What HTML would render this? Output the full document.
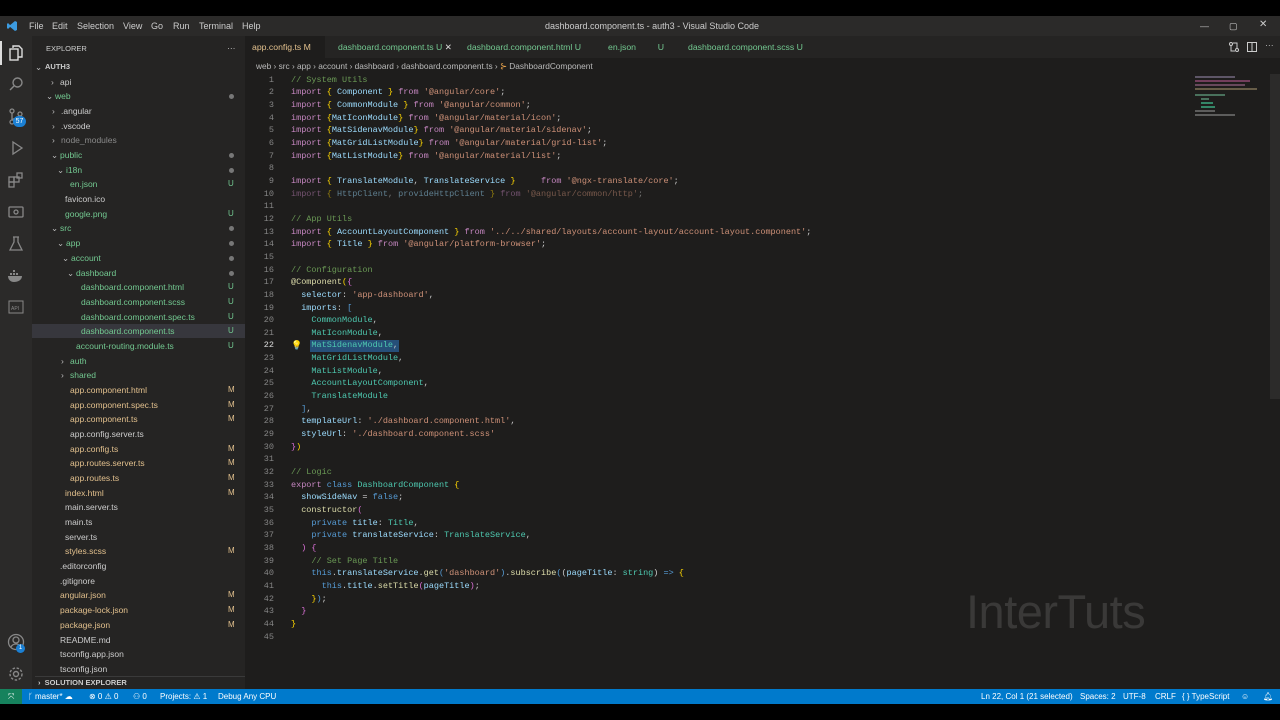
<!DOCTYPE html>
<html><head><meta charset="utf-8"><style>
*{margin:0;padding:0;box-sizing:border-box}
body{width:1280px;height:720px;background:#000;position:relative;overflow:hidden;font-family:"Liberation Sans",sans-serif;color:#ccc}
.abs{position:absolute}
#title{top:16px;left:0;width:1280px;height:20px;background:#2b2a29;font-size:9px}
#title span{position:absolute;top:5px;color:#ccc}
#act{top:36px;left:0;width:32px;height:653px;background:#2b2a29}
#side{top:36px;left:32px;width:213px;height:653px;background:#252423}
#ed{top:36px;left:245px;width:1035px;height:653px;background:#1e1d1c}
#tabs{top:36px;left:245px;width:1035px;height:22px;background:#252423;font-size:8.7px}
.tab{position:absolute;top:0;height:22px;line-height:22px;padding-left:7px}
.row{position:absolute;font-size:8.5px;height:14px;line-height:14px;white-space:nowrap}
.g{color:#73c991}.m{color:#e2c08d}.w{color:#ccc}.gr{color:#8a8a8a}
.badge{position:absolute;left:228px;font-size:8px}
.dot{position:absolute;left:229px;width:5px;height:5px;border-radius:50%;background:#777}
#code{position:absolute;left:0;top:73.7px;font-family:"Liberation Mono",monospace;font-size:8.5px;line-height:12.66px;white-space:pre}
#nums{position:absolute;left:245px;width:29px;text-align:right;top:73.7px;font-family:"Liberation Mono",monospace;font-size:8.5px;line-height:12.66px;color:#858585;white-space:pre}
.k{color:#c586c0}.b{color:#ffd700}.i{color:#9cdcfe}.s{color:#ce9178}.c{color:#6a9955}.t{color:#4ec9b0}.f{color:#dcdcaa}.p{color:#da70d6}.d{color:#569cd6}.dim{opacity:.5}
#status{top:689px;left:0;width:1280px;height:15px;background:#007acc;font-size:8px;color:#fff}
#status span{position:absolute;top:3px}
</style></head><body>
<div id="title" class="abs">
<svg class="abs" style="left:6px;top:4px" width="12" height="12" viewBox="0 0 12 12"><path d="M9 1 L11 2 V10 L9 11 L3 6 Z M1 4 L2 3 L5 6 L2 9 L1 8 Z" fill="#3c9be0"/></svg>
<span style="left:29px">File</span><span style="left:52px">Edit</span><span style="left:77px">Selection</span><span style="left:123px">View</span><span style="left:151px">Go</span><span style="left:173px">Run</span><span style="left:199px">Terminal</span><span style="left:242px">Help</span>
<span style="left:545px">dashboard.component.ts - auth3 - Visual Studio Code</span>
<span style="left:1200px;color:#bbb">—</span><span style="left:1229px">▢</span><span style="left:1259px;font-size:10px;top:3px">✕</span>
</div>
<div id="act" class="abs">
<svg class="abs" style="left:7px;top:8px" width="18" height="18" viewBox="0 0 18 18" fill="none" stroke="#ddd" stroke-width="1.4"><path d="M6 4 V2 H12 L15 5 V13 H11"/><rect x="3" y="5" width="8" height="11"/></svg>
<div class="abs" style="left:0;top:5px;width:2px;height:24px;background:#ddd"></div>
<svg class="abs" style="left:8px;top:40px" width="16" height="16" viewBox="0 0 16 16" fill="none" stroke="#888" stroke-width="1.4"><circle cx="9.5" cy="6.5" r="4.5"/><path d="M6 10 L2 14"/></svg>
<svg class="abs" style="left:8px;top:72px" width="16" height="18" viewBox="0 0 16 18" fill="none" stroke="#888" stroke-width="1.3"><circle cx="4" cy="3" r="2"/><circle cx="4" cy="14" r="2"/><circle cx="12" cy="6" r="2"/><path d="M4 5 V12 M12 8 C12 11 4 10 4 12"/></svg>
<div class="abs" style="left:13px;top:80px;width:13px;height:11px;border-radius:6px;background:#1b80d4;color:#fff;font-size:7px;text-align:center;line-height:11px">57</div>
<svg class="abs" style="left:8px;top:104px" width="16" height="16" viewBox="0 0 16 16" fill="none" stroke="#888" stroke-width="1.3"><path d="M5 2 L14 8 L5 14 Z"/></svg>
<svg class="abs" style="left:8px;top:136px" width="16" height="16" viewBox="0 0 16 16" fill="none" stroke="#888" stroke-width="1.3"><rect x="1" y="5" width="5" height="5"/><rect x="6" y="5" width="5" height="5"/><rect x="1" y="10" width="5" height="5"/><rect x="9" y="1" width="5" height="5"/></svg>
<svg class="abs" style="left:8px;top:168px" width="16" height="16" viewBox="0 0 16 16" fill="none" stroke="#888" stroke-width="1.3"><rect x="1" y="3" width="14" height="10" rx="1"/><circle cx="8" cy="8" r="2"/></svg>
<svg class="abs" style="left:8px;top:200px" width="16" height="16" viewBox="0 0 16 16" fill="none" stroke="#888" stroke-width="1.3"><path d="M6 1 V6 L2 14 H14 L10 6 V1 M5 1 H11"/></svg>
<svg class="abs" style="left:7px;top:232px" width="18" height="16" viewBox="0 0 18 16" fill="#888"><path d="M1 8 H15 C15 12 11 14 7 14 C3 14 1 11 1 8Z M3 5h2v2H3z M6 5h2v2H6z M9 5h2v2H9z M6 2h2v2H6z"/></svg>
<svg class="abs" style="left:8px;top:264px" width="16" height="14" viewBox="0 0 16 14" fill="none" stroke="#888"><rect x="1" y="1" width="14" height="12"/><text x="3" y="10" font-size="5" fill="#888" stroke="none" font-family="Liberation Sans">API</text></svg>
<svg class="abs" style="left:7px;top:597px" width="18" height="18" viewBox="0 0 18 18" fill="none" stroke="#888" stroke-width="1.3"><circle cx="9" cy="9" r="7.5"/><circle cx="9" cy="7" r="3"/><path d="M4 14 C6 10 12 10 14 14"/></svg>
<div class="abs" style="left:16px;top:608px;width:9px;height:9px;border-radius:50%;background:#1b80d4;color:#fff;font-size:6px;text-align:center;line-height:9px">1</div>
<svg class="abs" style="left:8px;top:630px" width="16" height="16" viewBox="0 0 16 16" fill="none" stroke="#888" stroke-width="1.4"><circle cx="8" cy="8" r="2.5"/><circle cx="8" cy="8" r="6" stroke-dasharray="2.5 1.6"/></svg>
</div>
<div id="side" class="abs">
<div class="row w" style="left:14px;top:6px;font-size:7.5px">EXPLORER</div>
<div class="row w" style="left:195px;top:5px">···</div>
</div>
<div class="abs" style="left:32px;top:324px;width:213px;height:14px;background:#37373d"></div>
<div id="rows"></div>
<div id="ed" class="abs"></div>
<div id="tabs" class="abs">
<div class="tab m" style="left:0;width:80px;background:#1e1d1c">app.config.ts M</div>
<div class="tab w" style="left:86px;width:126px;color:#73c991">dashboard.component.ts U <span style="color:#ddd">✕</span></div>
<div class="tab g" style="left:215px">dashboard.component.html U</div>
<div class="tab g" style="left:356px">en.json&nbsp;&nbsp;&nbsp;&nbsp;&nbsp;&nbsp;&nbsp;&nbsp;&nbsp;U</div>
<div class="tab g" style="left:436px">dashboard.component.scss U</div>
<svg class="abs" style="left:984px;top:6px" width="10" height="10" viewBox="0 0 10 10" fill="none" stroke="#ccc"><circle cx="2" cy="2" r="1.5"/><circle cx="8" cy="8" r="1.5"/><path d="M2 4 V9 H6 M4 1 H8 V6"/></svg>
<svg class="abs" style="left:1002px;top:6px" width="10" height="10" viewBox="0 0 10 10" fill="none" stroke="#ccc"><rect x="0.5" y="0.5" width="9" height="9"/><path d="M5 0 V10"/></svg>
<span class="abs" style="left:1020px;top:4px;color:#ccc">···</span>
</div>
<div class="abs" style="left:256px;top:61px;font-size:8.3px;color:#bbb;white-space:nowrap">web › src › app › account › dashboard › dashboard.component.ts › <span style="color:#e8a34c">⊱</span> DashboardComponent</div>
<div class="abs" style="left:310px;top:340px;width:89px;height:12px;background:#264f78"></div>
<div class="abs" style="left:291px;top:340px;width:9px;height:12px;color:#ffcc00;font-size:9px">💡</div>
<div id="nums"></div>
<div id="code" style="left:291px"></div>
<div class="abs" style="left:1195px;top:74px;width:70px;height:60px;opacity:.6">
<div style="height:2px;width:40px;background:#8a7d99;margin:2px 0"></div><div style="height:2px;width:55px;background:#a58;margin:2px 0"></div><div style="height:2px;width:50px;background:#968;margin:2px 0"></div><div style="height:2px;width:62px;background:#986;margin:2px 0"></div><div style="height:2px;width:30px;background:#6a8;margin:4px 0 2px"></div><div style="height:2px;width:8px;background:#6a8;margin:2px 6px"></div><div style="height:2px;width:12px;background:#4c9;margin:2px 6px"></div><div style="height:2px;width:14px;background:#4c9;margin:2px 6px"></div><div style="height:2px;width:20px;background:#888;margin:2px 0"></div><div style="height:2px;width:40px;background:#888;margin:2px 0"></div>
</div>
<div class="abs" style="left:1270px;top:74px;width:10px;height:325px;background:#2c2b2a"></div>
<div class="abs" style="left:966px;top:584px;font-size:47px;color:#3a3938;letter-spacing:-0.5px">InterTuts</div>
<div class="abs" style="left:35px;top:676px;width:210px;height:13px;font-size:7.5px;font-weight:bold;color:#ccc;border-top:1px solid #3a3a3a;line-height:12px;padding-left:3px">›&nbsp; SOLUTION EXPLORER</div>
<div id="status" class="abs">
<div class="abs" style="left:0;top:0;width:22px;height:15px;background:#16825d"></div>
<span style="left:8px">⤧</span>
<span style="left:28px">ᚴ master* ☁</span>
<span style="left:89px">⊗ 0 ⚠ 0</span>
<span style="left:133px">⚇ 0</span>
<span style="left:160px">Projects: ⚠ 1</span>
<span style="left:218px">Debug Any CPU</span>
<span style="left:981px">Ln 22, Col 1 (21 selected)</span>
<span style="left:1080px">Spaces: 2</span>
<span style="left:1123px">UTF-8</span>
<span style="left:1155px">CRLF</span>
<span style="left:1182px">{ } TypeScript</span>
<span style="left:1241px">☺</span><span style="left:1263px">🔔︎</span>
</div>
<script>
const R=[
["AUTH3",45,"w","",1,"v"],
["api",60,"w","",0,">"],
["web",55,"g","dot",0,"v"],
[".angular",61,"w","",0,">"],
[".vscode",61,"w","",0,">"],
["node_modules",61,"gr","",0,">"],
["public",60,"g","dot",0,"v"],
["i18n",66,"g","dot",0,"v"],
["en.json",70,"g","U"],
["favicon.ico",65,"w",""],
["google.png",65,"g","U"],
["src",60,"g","dot",0,"v"],
["app",66,"g","dot",0,"v"],
["account",71,"g","dot",0,"v"],
["dashboard",76,"g","dot",0,"v"],
["dashboard.component.html",81,"g","U"],
["dashboard.component.scss",81,"g","U"],
["dashboard.component.spec.ts",81,"g","U"],
["dashboard.component.ts",81,"g","U"],
["account-routing.module.ts",76,"g","U"],
["auth",70,"g","",0,">"],
["shared",70,"g","",0,">"],
["app.component.html",70,"m","M"],
["app.component.spec.ts",70,"m","M"],
["app.component.ts",70,"m","M"],
["app.config.server.ts",70,"w",""],
["app.config.ts",70,"m","M"],
["app.routes.server.ts",70,"m","M"],
["app.routes.ts",70,"m","M"],
["index.html",65,"m","M"],
["main.server.ts",65,"w",""],
["main.ts",65,"w",""],
["server.ts",65,"w",""],
["styles.scss",65,"m","M"],
[".editorconfig",60,"w",""],
[".gitignore",60,"w",""],
["angular.json",60,"m","M"],
["package-lock.json",60,"m","M"],
["package.json",60,"m","M"],
["README.md",60,"w",""],
["tsconfig.app.json",60,"w",""],
["tsconfig.json",60,"w",""]];
let h="";R.forEach((r,i)=>{const y=60+i*14.68;
 h+=`<div class="row ${r[2]}" style="left:${r[1]}px;top:${y}px;${r[4]?'font-weight:bold;font-size:7.5px':''}">${r[0]}</div>`;
 if(r[5])h+=`<div class="row w" style="left:${r[1]-(r[4]?10:9)}px;top:${y}px;color:#bbb">${r[5]=="v"?"⌄":"›"}</div>`;
 if(r[3]=="dot")h+=`<div class="dot" style="top:${y+5}px"></div>`;
 else if(r[3])h+=`<div class="row badge ${r[2]}" style="top:${y}px">${r[3]}</div>`;});
document.getElementById("rows").innerHTML=h;
const L=[
'<span class="c">// System Utils</span>',
'<span class="k">import</span> <span class="b">{</span> <span class="i">Component</span> <span class="b">}</span> <span class="k">from</span> <span class="s">\'@angular/core\'</span>;',
'<span class="k">import</span> <span class="b">{</span> <span class="i">CommonModule</span> <span class="b">}</span> <span class="k">from</span> <span class="s">\'@angular/common\'</span>;',
'<span class="k">import</span> <span class="b">{</span><span class="i">MatIconModule</span><span class="b">}</span> <span class="k">from</span> <span class="s">\'@angular/material/icon\'</span>;',
'<span class="k">import</span> <span class="b">{</span><span class="i">MatSidenavModule</span><span class="b">}</span> <span class="k">from</span> <span class="s">\'@angular/material/sidenav\'</span>;',
'<span class="k">import</span> <span class="b">{</span><span class="i">MatGridListModule</span><span class="b">}</span> <span class="k">from</span> <span class="s">\'@angular/material/grid-list\'</span>;',
'<span class="k">import</span> <span class="b">{</span><span class="i">MatListModule</span><span class="b">}</span> <span class="k">from</span> <span class="s">\'@angular/material/list\'</span>;',
'',
'<span class="k">import</span> <span class="b">{</span> <span class="i">TranslateModule</span>, <span class="i">TranslateService</span> <span class="b">}</span>     <span class="k">from</span> <span class="s">\'@ngx-translate/core\'</span>;',
'<span class="dim"><span class="k">import</span> <span class="b">{</span> <span class="i">HttpClient</span>, <span class="i">provideHttpClient</span> <span class="b">}</span> <span class="k">from</span> <span class="s">\'@angular/common/http\'</span>;</span>',
'',
'<span class="c">// App Utils</span>',
'<span class="k">import</span> <span class="b">{</span> <span class="i">AccountLayoutComponent</span> <span class="b">}</span> <span class="k">from</span> <span class="s">\'../../shared/layouts/account-layout/account-layout.component\'</span>;',
'<span class="k">import</span> <span class="b">{</span> <span class="i">Title</span> <span class="b">}</span> <span class="k">from</span> <span class="s">\'@angular/platform-browser\'</span>;',
'',
'<span class="c">// Configuration</span>',
'<span class="f">@Component</span><span class="b">(</span><span class="p">{</span>',
'  <span class="i">selector</span>: <span class="s">\'app-dashboard\'</span>,',
'  <span class="i">imports</span>: <span class="d">[</span>',
'    <span class="t">CommonModule</span>,',
'    <span class="t">MatIconModule</span>,',
'    <span class="t">MatSidenavModule</span>,',
'    <span class="t">MatGridListModule</span>,',
'    <span class="t">MatListModule</span>,',
'    <span class="t">AccountLayoutComponent</span>,',
'    <span class="t">TranslateModule</span>',
'  <span class="d">]</span>,',
'  <span class="i">templateUrl</span>: <span class="s">\'./dashboard.component.html\'</span>,',
'  <span class="i">styleUrl</span>: <span class="s">\'./dashboard.component.scss\'</span>',
'<span class="p">}</span><span class="b">)</span>',
'',
'<span class="c">// Logic</span>',
'<span class="k">export</span> <span class="d">class</span> <span class="t">DashboardComponent</span> <span class="b">{</span>',
'  <span class="i">showSideNav</span> = <span class="d">false</span>;',
'  <span class="f">constructor</span><span class="p">(</span>',
'    <span class="d">private</span> <span class="i">title</span>: <span class="t">Title</span>,',
'    <span class="d">private</span> <span class="i">translateService</span>: <span class="t">TranslateService</span>,',
'  <span class="p">)</span> <span class="p">{</span>',
'    <span class="c">// Set Page Title</span>',
'    <span class="d">this</span>.<span class="i">translateService</span>.<span class="f">get</span><span class="d">(</span><span class="s">\'dashboard\'</span><span class="d">)</span>.<span class="f">subscribe</span><span class="d">(</span>(<span class="i">pageTitle</span>: <span class="t">string</span>) <span class="d">=&gt;</span> <span class="b">{</span>',
'      <span class="d">this</span>.<span class="i">title</span>.<span class="f">setTitle</span><span class="p">(</span><span class="i">pageTitle</span><span class="p">)</span>;',
'    <span class="b">}</span><span class="d">)</span>;',
'  <span class="p">}</span>',
'<span class="b">}</span>',
''];
document.getElementById("code").innerHTML=L.join("\n");
document.getElementById("nums").innerHTML=L.map((_,i)=>i==21?'<span style="color:#ddd">22</span>':(i+1)).join("\n");
</script>
</body></html>
